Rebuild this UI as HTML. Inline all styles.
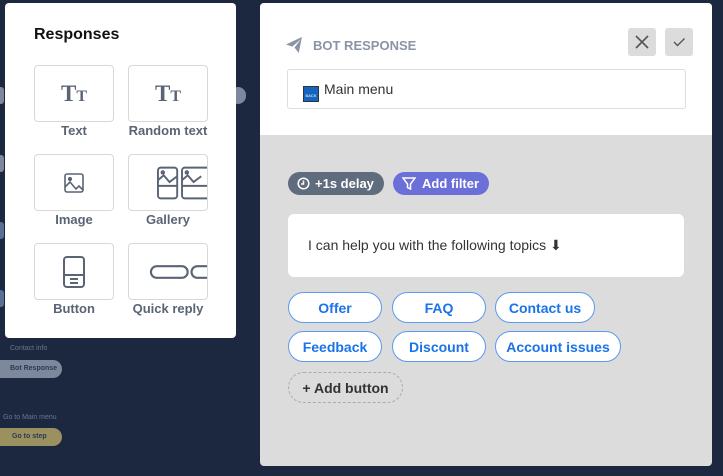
<!DOCTYPE html>
<html><head><style>
*{box-sizing:border-box;margin:0;padding:0}
body{width:723px;height:476px;background:#1b2840;font-family:"Liberation Sans",sans-serif;position:relative;overflow:hidden}
.a{position:absolute}
.lp{left:5px;top:3px;width:231px;height:335px;background:#fff;border-radius:4px}
.tile{position:absolute;width:80px;height:57px;border:1px solid #d8d8d8;border-radius:4px;display:flex;align-items:center;justify-content:center;overflow:hidden}
.lbl{position:absolute;width:80px;text-align:center;font-size:13px;font-weight:bold;color:#5a6475}
.rp{left:260px;top:3px;width:452px;height:463px;background:#dcdcdc;border-radius:4px;overflow:hidden}
.pill{position:absolute;height:31px;border:1.5px solid #5a9af0;border-radius:16px;background:#fff;color:#1a73e8;font-weight:bold;font-size:14px;display:flex;align-items:center;justify-content:center}
.tt{font-family:'Liberation Serif',serif;font-weight:bold;color:#5a6475;font-size:23px}
.bg{white-space:nowrap}
</style></head><body>
<div class="a" style="left:10px;top:345px;font-size:7px;color:#6a7690">Contact info</div>
<div class="a bg" style="left:-8px;top:360px;width:70px;height:18px;border-radius:9px;background:#7d889c;color:#2a3a55;font-size:7px;font-weight:bold;padding:5px 0 0 18px">Bot Response</div>
<div class="a" style="left:3px;top:414px;font-size:7px;color:#6a7690">Go to Main menu</div>
<div class="a bg" style="left:-8px;top:428px;width:70px;height:18px;border-radius:9px;background:#9b9160;color:#2a3a55;font-size:7px;font-weight:bold;padding:5px 0 0 20px">Go to step</div>
<div class="a" style="left:230px;top:87px;width:16px;height:17px;border-radius:8px;background:#7d889c"></div>
<div class="a" style="left:-4px;top:87px;width:8px;height:17px;background:#7d889c;border-radius:3px"></div>
<div class="a" style="left:-4px;top:155px;width:8px;height:17px;background:#7d889c;border-radius:3px"></div>
<div class="a" style="left:-4px;top:222px;width:8px;height:17px;background:#5a6f94;border-radius:3px"></div>
<div class="a" style="left:-4px;top:290px;width:8px;height:17px;background:#5a6f94;border-radius:3px"></div>

<div class="a lp">
<div class="a" style="left:29px;top:23px;font-size:16px;font-weight:bold;color:#111">Responses</div>
<div class="tile" style="left:29px;top:62px"><span class="tt">T<span style="font-size:16px">T</span></span></div>
<div class="tile" style="left:123px;top:62px"><span class="tt">T<span style="font-size:16px">T</span></span></div>
<div class="lbl" style="left:29px;top:120px">Text</div>
<div class="lbl" style="left:118px;top:120px;width:90px">Random text</div>
<div class="tile" style="left:29px;top:151px"><svg width="22" height="22" viewBox="0 0 22 22" fill="none" stroke="#5a6475" stroke-width="1.6"><rect x="2" y="2" width="18" height="18" rx="2"/><circle cx="7" cy="7" r="1.3" fill="#5a6475"/><path d="M2 15l5-5 6 7 3-3 4 4"/></svg></div>
<div class="tile" style="left:123px;top:151px;justify-content:flex-start;padding-left:28px"><svg width="52" height="34" viewBox="0 0 52 34" fill="none" stroke="#5a6475" stroke-width="2"><rect x="1" y="1" width="20" height="32" rx="3"/><path d="M1 20h20M1 14l6-5 6 7 8-6"/><circle cx="6" cy="6" r="1.3" fill="#5a6475"/><rect x="26" y="1" width="30" height="32" rx="3"/><path d="M26 20h26M26 14l6-5 6 7 8-6"/><circle cx="31" cy="6" r="1.3" fill="#5a6475"/></svg></div>
<div class="lbl" style="left:29px;top:209px">Image</div>
<div class="lbl" style="left:123px;top:209px">Gallery</div>
<div class="tile" style="left:29px;top:240px"><svg width="24" height="34" viewBox="0 0 24 34" fill="none" stroke="#5a6475" stroke-width="2"><rect x="2" y="2" width="20" height="30" rx="3"/><path d="M2 20h20M8 24h8M8 28h8"/></svg></div>
<div class="tile" style="left:123px;top:240px;justify-content:flex-start;padding-left:20px"><svg width="60" height="20" viewBox="0 0 60 20" fill="none" stroke="#5a6475" stroke-width="2.2"><rect x="2" y="4" width="38" height="12" rx="6"/><path d="M62 4h-12a6 6 0 0 0 0 12h12"/></svg></div>
<div class="lbl" style="left:29px;top:298px">Button</div>
<div class="lbl" style="left:123px;top:298px">Quick reply</div>
</div>

<div class="a rp">
<div class="a" style="left:0;top:0;width:452px;height:132px;background:#fff"></div>
<svg class="a" style="left:26px;top:34px" width="17" height="16" viewBox="0 0 16 15"><path d="M0 7L15 0 12 15 8 10 14 2 6 9z" fill="#8a94a6"/></svg>
<div class="a" style="left:53px;top:35px;font-size:13px;font-weight:bold;color:#8a94a6">BOT RESPONSE</div>
<div class="a" style="left:368px;top:25px;width:28px;height:28px;background:#dcdcdc;border-radius:3px"><svg width="28" height="28"><path d="M8 8l12 12M20 8L8 20" stroke="#555" stroke-width="1.6"/></svg></div>
<div class="a" style="left:405px;top:25px;width:28px;height:28px;background:#dcdcdc;border-radius:3px"><svg width="28" height="28"><path d="M9 14l3.5 3.5 7-7" stroke="#555" stroke-width="1.4" fill="none"/></svg></div>
<div class="a" style="left:27px;top:66px;width:399px;height:40px;border:1px solid #ddd;border-radius:3px;font-size:14px;color:#333;padding:11px 0 0 15px"><span style="display:inline-block;width:16px;height:16px;background:#1565c0;border:1px solid #333;vertical-align:-3px;margin-right:5px;font-size:4px;color:#fff;text-align:center;line-height:18px">BACK</span>Main menu</div>
<div class="a" style="left:28px;top:169px;width:96px;height:23px;border-radius:12px;background:#5f6c7e;color:#fff;font-size:13px;font-weight:bold;padding:4px 0 0 9px"><svg width="13" height="13" style="vertical-align:-2px;margin-right:5px"><circle cx="6.5" cy="6.5" r="5.3" stroke="#fff" stroke-width="1.5" fill="none"/><path d="M6.5 3.5v3.5H4" stroke="#fff" stroke-width="1.5" fill="none"/></svg>+1s delay</div>
<div class="a" style="left:133px;top:169px;width:96px;height:23px;border-radius:12px;background:#6b6fd8;color:#fff;font-size:13px;font-weight:bold;padding:4px 0 0 9px"><svg width="14" height="13" style="vertical-align:-2px;margin-right:6px"><path d="M1 1h12L8.5 7v5L5.5 10.5V7z" stroke="#fff" stroke-width="1.5" fill="none"/></svg>Add filter</div>
<div class="a" style="left:28px;top:211px;width:396px;height:63px;background:#fff;border-radius:6px;font-size:14px;color:#333;padding:23px 0 0 20px">I can help you with the following topics ⬇</div>
<div class="pill" style="left:28px;top:289px;width:94px">Offer</div>
<div class="pill" style="left:132px;top:289px;width:94px">FAQ</div>
<div class="pill" style="left:235px;top:289px;width:100px">Contact us</div>
<div class="pill" style="left:28px;top:328px;width:94px">Feedback</div>
<div class="pill" style="left:132px;top:328px;width:94px">Discount</div>
<div class="pill" style="left:235px;top:328px;width:126px">Account issues</div>
<div class="pill" style="left:28px;top:369px;width:115px;border:1px dashed #aaa;background:transparent;color:#333">+ Add button</div>
</div>
</body></html>
